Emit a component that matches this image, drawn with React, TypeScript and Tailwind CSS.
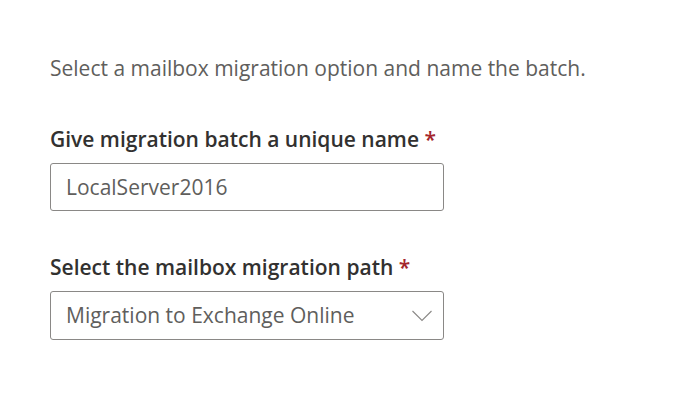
const Field = (props: { label: string; children: React.ReactNode; className?: string }) => {
  const { label, children, className } = props;
  return (
    <div className={className}>
      <label className="block text-[21px] leading-[28px] font-semibold text-[#323130]">
        {label} <span className="text-[#a4262c]">*</span>
      </label>
      <div className="mt-[10px]">{children}</div>
    </div>
  );
};

const Chevron = () => (
  <svg width="22" height="12" viewBox="0 0 22 12" fill="none" className="text-[#8a8886]">
    <polyline points="1.5,1 11,10.5 20.5,1" stroke="currentColor" strokeWidth="1.1" />
  </svg>
);

const App = () => {
  return (
    <div className="w-[696px] h-[398px] bg-white pl-[50px] pt-[54px] font-['Open_Sans',sans-serif]">
      <p className="text-[21px] leading-[28px] text-[#605e5c]">
        Select a mailbox migration option and name the batch.
      </p>

      <Field label="Give migration batch a unique name" className="mt-[43px]">
        <input
          defaultValue="LocalServer2016"
          className="w-[394px] h-[48px] rounded-[3px] border border-[#8a8886] px-[15px] text-[21px] text-[#605e5c] outline-none"
        />
      </Field>

      <Field label="Select the mailbox migration path" className="mt-[42px]">
        <div className="flex w-[394px] h-[49px] items-center justify-between rounded-[3px] border border-[#8a8886] pl-[15px] pr-[10px] text-[21px] text-[#605e5c]">
          <span>Migration to Exchange Online</span>
          <Chevron />
        </div>
      </Field>
    </div>
  );
};

export default App;
